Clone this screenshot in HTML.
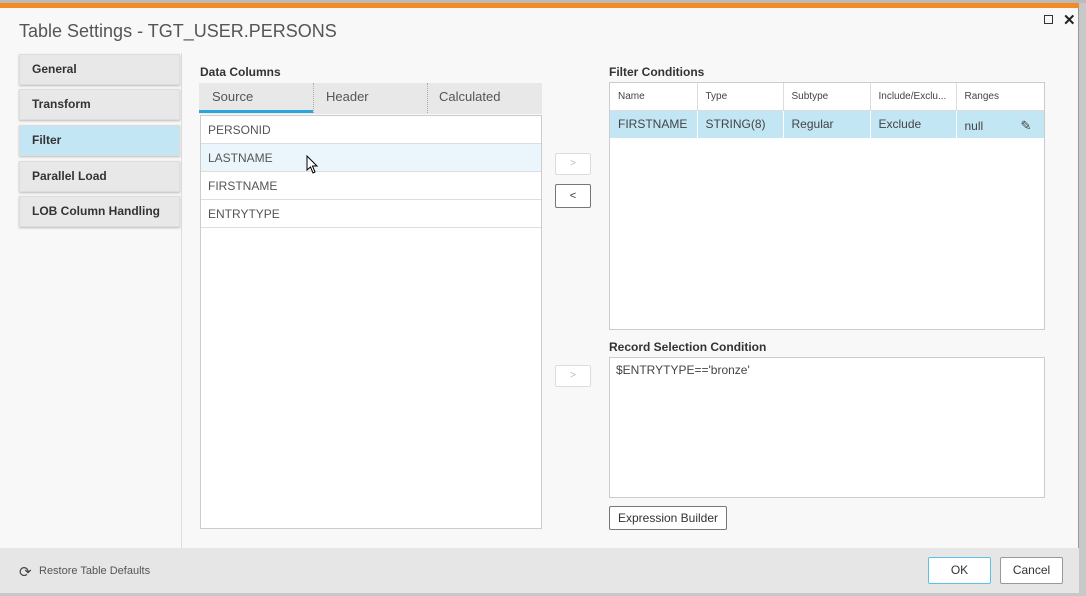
<!DOCTYPE html>
<html><head><style>
*{box-sizing:border-box;margin:0;padding:0}
body{width:1086px;height:596px;background:#c8c8c8;font-family:"Liberation Sans",sans-serif;position:relative;overflow:hidden;font-size:12px;color:#333}
.a{position:absolute}
.dlg{left:0;top:3px;width:1079px;height:590px;background:#f8f8f8;border-right:1px solid #999}
.side{left:19px;width:161px;height:31px;background:#e8e8e8;border:1px solid #ddd;box-shadow:0 1px 2px #bbb;font-weight:bold;font-size:12px;padding:7px 12px;color:#333}
.row{left:201px;width:340px;height:28px;border-bottom:1px solid #ddd;padding:7px 7px;font-size:12px;color:#555;background:#fff}
.btn{background:#fff;border:1px solid #777;border-radius:2px;text-align:center}
th,td{border-right:1px solid #ddd;text-align:left;font-weight:normal}
</style></head><body>
<div class="a" style="left:0;top:0;width:1086px;height:3px;background:#bbb"></div>
<div class="a dlg"></div>
<div class="a" style="left:0;top:3px;width:1079px;height:5px;background:#f38b20"></div>
<div class="a" style="left:19px;top:21px;font-size:18px;color:#555">Table Settings - TGT_USER.PERSONS</div>
<div class="a" style="left:1044px;top:15px;width:9px;height:9px;border:1.5px solid #333"></div>
<div class="a" style="left:1063px;top:11px;font-size:15px;font-weight:bold;color:#222">✕</div>
<div class="a" style="left:181px;top:53px;width:1px;height:495px;background:#ddd"></div>
<div class="a side" style="top:54px">General</div>
<div class="a side" style="top:89px">Transform</div>
<div class="a side" style="top:125px;background:#c3e6f5">Filter</div>
<div class="a side" style="top:161px">Parallel Load</div>
<div class="a side" style="top:196px">LOB Column Handling</div>
<div class="a" style="left:200px;top:65px;font-weight:bold;font-size:12px">Data Columns</div>
<div class="a" style="left:199px;top:83px;width:343px;height:31px;background:#e8e8e8"></div>
<div class="a" style="left:199px;top:110px;width:114px;height:3px;background:#2aa6dc"></div>
<div class="a" style="left:313px;top:83px;height:30px;border-left:1px dotted #aaa"></div>
<div class="a" style="left:427px;top:83px;height:30px;border-left:1px dotted #aaa"></div>
<div class="a" style="left:212px;top:89px;font-size:13px;color:#555">Source</div>
<div class="a" style="left:326px;top:89px;font-size:13px;color:#555">Header</div>
<div class="a" style="left:439px;top:89px;font-size:13px;color:#555">Calculated</div>
<div class="a" style="left:200px;top:115px;width:342px;height:414px;background:#fff;border:1px solid #ccc"></div>
<div class="a row" style="top:116px">PERSONID</div>
<div class="a row" style="top:144px;background:#eaf6fc">LASTNAME</div>
<div class="a row" style="top:172px">FIRSTNAME</div>
<div class="a row" style="top:200px">ENTRYTYPE</div>
<svg class="a" style="left:306px;top:155px" width="14" height="20"><path d="M1 1 L1 15 L4.5 12 L7 18 L9 17 L6.5 11 L11 11 Z" fill="#fff" stroke="#000"/></svg>
<div class="a btn" style="left:555px;top:153px;width:36px;height:22px;border-color:#ddd;color:#bbb;font-size:10px;line-height:20px">&gt;</div>
<div class="a btn" style="left:555px;top:184px;width:36px;height:24px;font-size:11px;line-height:22px">&lt;</div>
<div class="a btn" style="left:555px;top:365px;width:36px;height:22px;border-color:#ddd;color:#bbb;font-size:10px;line-height:20px">&gt;</div>
<div class="a" style="left:609px;top:65px;font-weight:bold">Filter Conditions</div>
<div class="a" style="left:609px;top:82px;width:436px;height:248px;background:#fff;border:1px solid #ccc">
<table style="border-collapse:collapse;width:434px;font-size:10px;color:#444">
<tr style="height:27px;border-bottom:1px solid #ddd"><th style="width:87px;padding-left:8px">Name</th><th style="width:86px;padding-left:8px">Type</th><th style="width:87px;padding-left:8px">Subtype</th><th style="width:86px;padding-left:8px">Include/Exclu...</th><th style="padding-left:8px;border:0">Ranges</th></tr>
<tr style="height:28px;background:#c3e6f5;font-size:12px"><td style="padding-left:8px;border-color:#fff">FIRSTNAME</td><td style="padding-left:8px;border-color:#fff">STRING(8)</td><td style="padding-left:8px;border-color:#fff">Regular</td><td style="padding-left:8px;border-color:#fff">Exclude</td><td style="padding-left:8px;padding-top:4px;border:0">null <span style="margin-left:34px;font-size:13px">✎</span></td></tr>
</table></div>
<div class="a" style="left:609px;top:340px;font-weight:bold">Record Selection Condition</div>
<div class="a" style="left:609px;top:357px;width:436px;height:141px;background:#fff;border:1px solid #ccc;padding:5px 6px;color:#444">$ENTRYTYPE=='bronze'</div>
<div class="a btn" style="left:609px;top:506px;width:118px;height:24px;line-height:22px;font-size:12px">Expression Builder</div>
<div class="a" style="left:0;top:548px;width:1079px;height:45px;background:#e6e6e6"></div>
<div class="a" style="left:19px;top:563px;font-size:15px;color:#444">⟳</div>
<div class="a" style="left:39px;top:565px;font-size:11px;color:#555">Restore Table Defaults</div>
<div class="a btn" style="left:928px;top:557px;width:63px;height:27px;line-height:25px;border-color:#5bc0ea">OK</div>
<div class="a btn" style="left:1000px;top:557px;width:63px;height:27px;line-height:25px;border-color:#999">Cancel</div>
</body></html>
